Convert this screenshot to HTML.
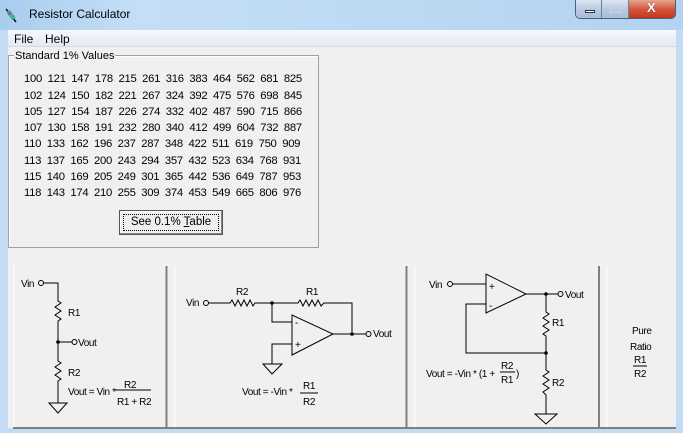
<!DOCTYPE html>
<html><head><meta charset="utf-8">
<style>
*{margin:0;padding:0;box-sizing:border-box}
body{width:683px;height:433px;overflow:hidden;background:#c4dcf3;font-family:"Liberation Sans",sans-serif;position:relative}
.title{position:absolute;left:0;top:0;width:683px;height:30px;background:linear-gradient(90deg,#a9cdef 0%,#c4def6 20%,#bcd8f3 60%,#b3d3f0 100%)}
.title .t{position:absolute;left:29px;top:7px;font-size:12px;color:#000}
.btns{position:absolute;left:575px;top:0;height:19px;width:101px;border:1px solid #4b5e7a;border-top:none;border-radius:0 0 5px 5px;overflow:hidden;display:flex}
.b{height:18px;background:linear-gradient(#dbe6f3,#b9cbe2 50%,#a8bdd8);border-right:1px solid #6d81a0;position:relative}
.cl{background:linear-gradient(#e8a593,#d4573c 50%,#c2371b);border:none}
.menu{position:absolute;left:8px;top:30px;width:668px;height:17px;background:linear-gradient(#f8f9fc,#e3e9f4);border-bottom:1px solid #d4dbe8;font-size:12px}
.menu span{position:absolute;top:2px}
.client{position:absolute;left:8px;top:47px;width:668px;height:381px;background:#f0f0f0}
.grp{position:absolute;left:8px;top:55px;width:311px;height:193px;border:1px solid #a0a0a0;box-shadow:inset 1px 1px 0 #fff}
.grp .lg{position:absolute;left:5px;top:-5px;background:#f0f0f0;font-size:11px;padding:0 1px;line-height:11px}
.row{position:absolute;left:24px;font-size:11.3px;white-space:pre;letter-spacing:-0.3px}
.btn{position:absolute;left:119px;top:210px;width:104px;height:25px;border:1px solid #555;background:#efefef;box-shadow:inset -1px -1px 0 #888,inset 1px 1px 0 #fff}
.btn div{position:absolute;left:3px;top:3px;right:3px;bottom:3px;border:1px dotted #000;font-size:11.5px;text-align:center;line-height:15px}
svg{position:absolute;left:0;top:0}
</style></head><body>
<div class="title">
<svg width="24" height="28" viewBox="0 0 24 28"><line x1="6" y1="9" x2="16" y2="22" stroke="#111" stroke-width="1.5"/><line x1="8" y1="11" x2="14" y2="19" stroke="#3ab" stroke-width="4"/><line x1="9" y1="13" x2="10" y2="14" stroke="#e33" stroke-width="4"/><line x1="12" y1="16" x2="13" y2="17" stroke="#3c3" stroke-width="4"/></svg>
<div class="t">Resistor Calculator</div>
<div class="btns"><div class="b" style="width:27px"><div style="position:absolute;left:9px;top:10px;width:10px;height:3px;background:#fff;border:1px solid #333"></div></div><div class="b" style="width:27px"><div style="position:absolute;left:8px;top:4px;width:11px;height:9px;border:1px solid #c9d4e2"></div></div><div class="b cl" style="width:47px"><div style="position:absolute;left:18px;top:0px;color:#fff;font-weight:bold;font-size:13px;text-shadow:0 0 1px #333">X</div></div></div>
</div>
<div class="menu"><span style="left:6px">File</span><span style="left:37px">Help</span></div>
<div class="client"></div>
<div class="grp"><div class="lg">Standard 1% Values</div></div>
<div class="row" style="top:73px">100  121  147  178  215  261  316  383  464  562  681  825</div>
<div class="row" style="top:90px">102  124  150  182  221  267  324  392  475  576  698  845</div>
<div class="row" style="top:106px">105  127  154  187  226  274  332  402  487  590  715  866</div>
<div class="row" style="top:122px">107  130  158  191  232  280  340  412  499  604  732  887</div>
<div class="row" style="top:138px">110  133  162  196  237  287  348  422  511  619  750  909</div>
<div class="row" style="top:155px">113  137  165  200  243  294  357  432  523  634  768  931</div>
<div class="row" style="top:171px">115  140  169  205  249  301  365  442  536  649  787  953</div>
<div class="row" style="top:187px">118  143  174  210  255  309  374  453  549  665  806  976</div>
<div class="btn"><div>See 0.1% <u>T</u>able</div></div>
<svg width="683" height="433" font-family="Liberation Sans,sans-serif" font-size="10" fill="none" stroke="#000" stroke-width="1">
<g stroke="#fff"><line x1="14" y1="266" x2="14" y2="427"/><line x1="175" y1="266" x2="175" y2="427"/><line x1="415" y1="266" x2="415" y2="427"/><line x1="607" y1="266" x2="607" y2="427"/></g>
<g stroke="#808080" stroke-width="2"><line x1="166.5" y1="266" x2="166.5" y2="428"/><line x1="406.5" y1="266" x2="406.5" y2="428"/><line x1="599" y1="266" x2="599" y2="428"/><line x1="13" y1="428" x2="676" y2="428"/></g>
<g fill="#000" stroke="none" letter-spacing="-0.4">
<text x="21" y="287">Vin</text><text x="68" y="316">R1</text><text x="78" y="346">Vout</text><text x="68" y="376">R2</text>
<text x="68" y="395">Vout = Vin *</text><text x="124" y="388">R2</text><text x="117" y="405">R1 + R2</text>
<text x="186" y="306">Vin</text><text x="236" y="295">R2</text><text x="306" y="295">R1</text><text x="373" y="337">Vout</text>
<text x="242" y="395">Vout = -Vin *</text><text x="303" y="389">R1</text><text x="303" y="405">R2</text>
<text x="295" y="326">-</text><text x="295" y="348">+</text>
<text x="429" y="288">Vin</text><text x="489" y="290">+</text><text x="489" y="309">-</text><text x="565" y="298">Vout</text>
<text x="552" y="326">R1</text><text x="552" y="386">R2</text>
<text x="426" y="377">Vout = -Vin * (1 +</text><text x="501" y="369">R2</text><text x="501" y="383">R1</text><text x="516" y="377">)</text>
<text x="632" y="334">Pure</text><text x="630" y="350">Ratio</text><text x="634" y="363">R1</text><text x="634" y="377">R2</text>
<circle cx="58" cy="342" r="1.8"/><circle cx="272" cy="303" r="1.8"/><circle cx="352" cy="334" r="1.8"/><circle cx="546" cy="294" r="1.8"/><circle cx="546" cy="353" r="1.8"/>
</g>
<circle cx="41" cy="283" r="2.5"/><polyline points="44,283 58,283 58,301 61,303 55,307 61,311 55,315 61,319 58,321 58,361 61,363 55,367 61,371 55,375 61,379 58,381 58,403"/>
<line x1="58" y1="342" x2="72" y2="342"/><circle cx="74.5" cy="342" r="2.5"/>
<polygon points="49,403 67,403 58,413"/>
<line x1="115" y1="390" x2="151" y2="390"/>
<circle cx="206" cy="303" r="2.5"/><polyline points="209,303 230,303 232,300 235,306 238,300 241,306 244,300 247,306 250,300 253,306 255,303 298,303 300,300 303,306 306,300 309,306 312,300 315,306 318,300 321,306 324,303 352,303 352,334 366,334"/>
<circle cx="368.5" cy="334" r="2.5"/>
<polygon points="292,315 292,355 333,334"/>
<polyline points="272,303 272,322 292,322"/><polyline points="292,344 272,344 272,364"/>
<line x1="333" y1="334" x2="352" y2="334"/>
<polygon points="263,364 282,364 272,374"/>
<line x1="300" y1="393" x2="318" y2="393"/>
<circle cx="450" cy="284" r="2.5"/><line x1="453" y1="284" x2="486" y2="284"/>
<polygon points="486,274 486,313 526,294"/>
<polyline points="526,294 558,294"/><circle cx="560.5" cy="294" r="2.5"/>
<polyline points="546,294 546,312 549,314 543,318 549,322 543,326 549,330 543,334 546,336 546,370 549,372 543,376 549,380 543,384 549,388 543,392 546,395 546,414"/>
<polyline points="486,304 466,304 466,353 546,353"/>
<polygon points="535,414 557,414 546,424"/>
<line x1="500" y1="372" x2="515" y2="372"/>
<line x1="633" y1="366" x2="647" y2="366"/>
</svg>
</body></html>
